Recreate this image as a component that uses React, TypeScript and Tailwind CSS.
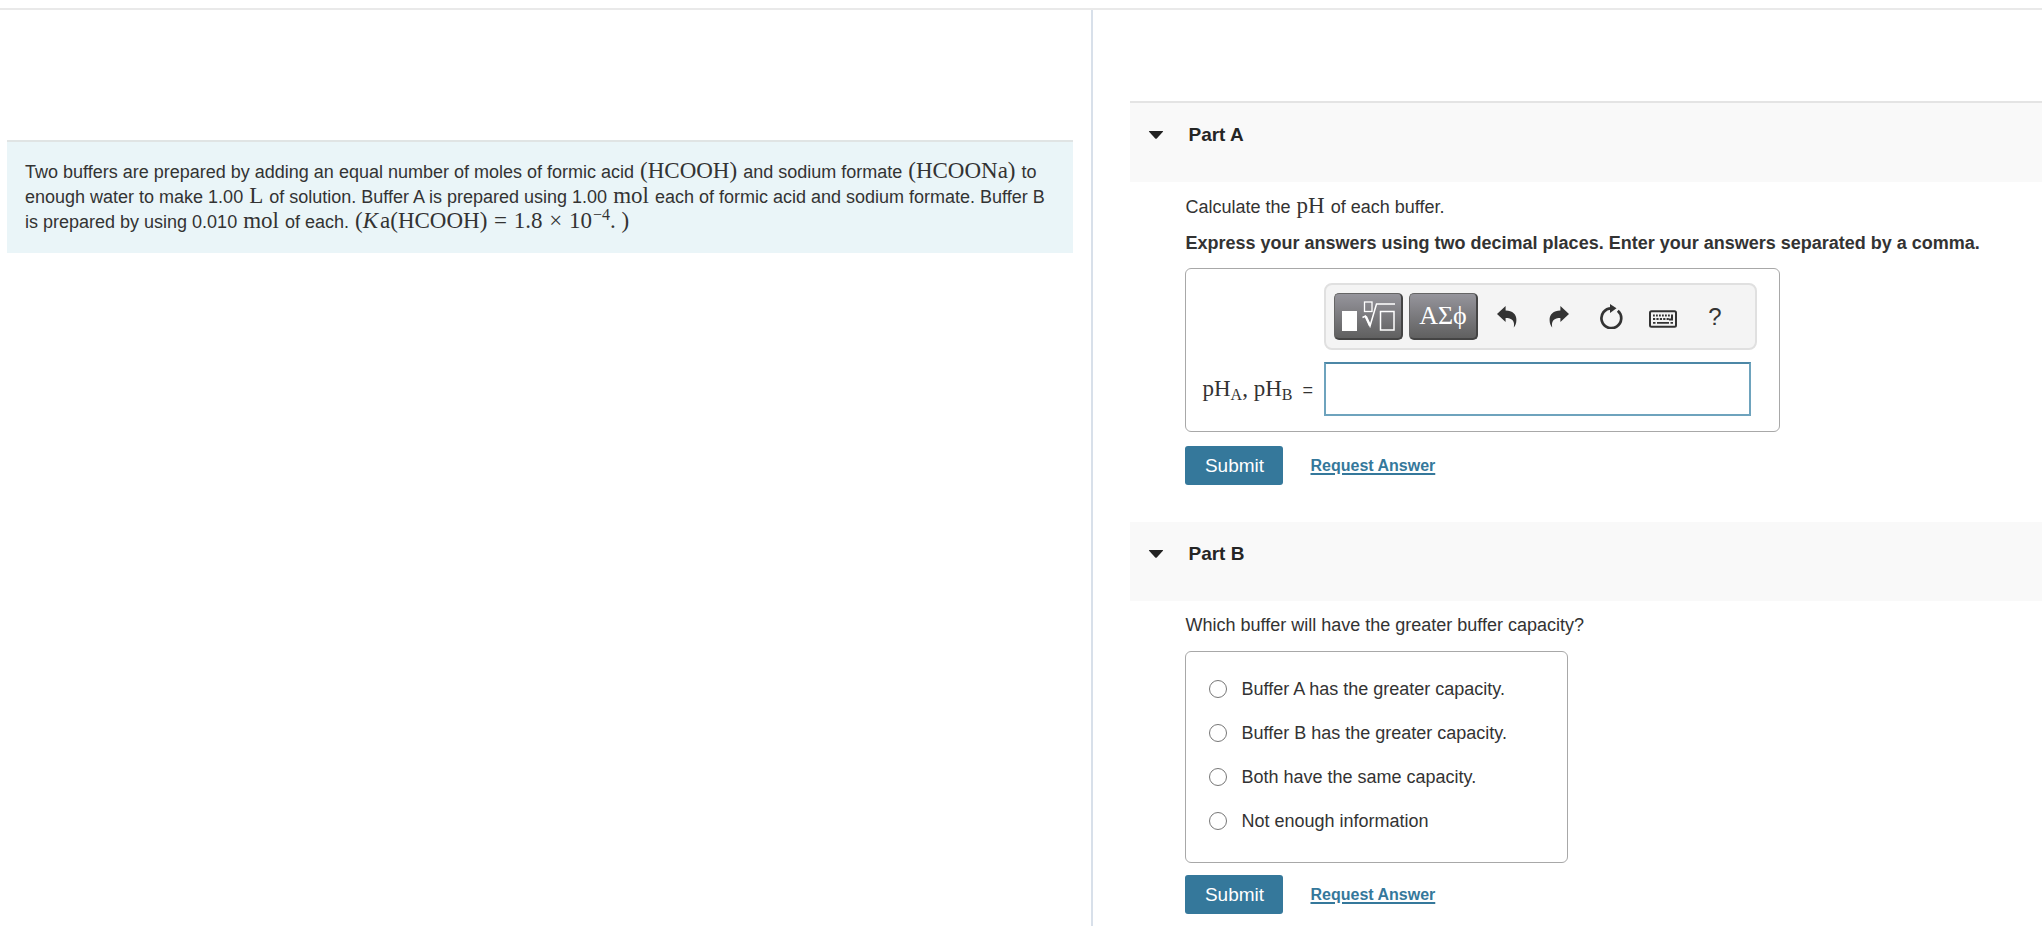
import React, { useState } from "react";

const CHOICES = [
  "Buffer A has the greater capacity.",
  "Buffer B has the greater capacity.",
  "Both have the same capacity.",
  "Not enough information",
];

// Inline chemistry / math text
const Tex = ({ children }: { children: React.ReactNode }) => (
  <span className="px-px font-['Liberation_Serif',serif] text-[23px] leading-none">
    {children}
  </span>
);

const PartHeader = ({ title, open, onToggle, className }: {
  title: string;
  open: boolean;
  onToggle: () => void;
  className: string;
}) => (
  <h2 className={className}>
    <button
      type="button"
      aria-expanded={open}
      onClick={onToggle}
      className="flex items-center gap-6 pl-[18px] text-[19px] leading-6 font-bold text-[#252525]"
    >
      <svg
        width="16"
        height="10"
        viewBox="0 0 16 10"
        className={open ? "" : "-rotate-90"}
        aria-hidden="true"
      >
        <path d="M1.5 1h13q1 0 .4.8L9 8.2q-1 1-2 0L1.1 1.8Q.5 1 1.5 1z" fill="#222" />
      </svg>
      {title}
    </button>
  </h2>
);

const Actions = ({ className }: { className: string }) => (
  <div className={className}>
    <button
      type="submit"
      className="h-[39px] w-[98px] rounded-[3px] bg-[#35789b] text-[19px] text-white hover:bg-[#2a617e]"
    >
      Submit
    </button>
    <a href="#answer" className="text-base font-bold text-[#35789b] underline decoration-2 underline-offset-2">
      Request Answer
    </a>
  </div>
);

const TemplateIcon = () => (
  <svg width="53" height="30" viewBox="0 0 53 30" fill="none" stroke="#fff" aria-hidden="true">
    <rect x="0" y="10" width="15" height="20" fill="#fff" stroke="none" />
    <rect x="22.5" y="1" width="7.5" height="9.5" strokeWidth="1.3" />
    <path d="M20.5 16.5l3-1.5 4.5 10L34.5 3H53" strokeWidth="1.5" />
    <path d="M23.8 15.5l4.2 9" strokeWidth="2.4" />
    <rect x="38.5" y="10.5" width="13.5" height="18.5" strokeWidth="1.5" />
  </svg>
);

const UndoIcon = ({ flip }: { flip?: boolean }) => (
  <svg
    width="20"
    height="22"
    viewBox="0 0 20 22"
    className={flip ? "-scale-x-100" : ""}
    aria-hidden="true"
  >
    <path
      d="M0 8L8.6 0v4.6C15.5 4.8 19.6 8.5 19.4 14c0 3-1 5.5-2.6 7.6.5-3.2.3-5.6-1.2-7.3-1.6-1.7-4-2.3-7-2.3V16z"
      fill="#333"
    />
  </svg>
);

const ResetIcon = () => (
  <svg width="24" height="25" viewBox="0 0 24 25" aria-hidden="true">
    <path d="M18.8 6.7A9.9 9.9 0 1 1 12.5 4.3" fill="none" stroke="#333" strokeWidth="2.7" />
    <path d="M11 0l6.5 4.2L11 9z" fill="#333" />
  </svg>
);

const KeyboardIcon = () => (
  <svg width="28" height="18" viewBox="0 0 28 18" fill="none" stroke="#333" aria-hidden="true">
    <rect x="1" y="1.2" width="26" height="15.6" rx="1.5" strokeWidth="2" />
    <path d="M4 5.5h17" strokeWidth="1.8" strokeDasharray="1.8 1.2" />
    <path d="M4 9h17" strokeWidth="1.8" strokeDasharray="2.2 1.2" />
    <path d="M23 4.5v5h-3" strokeWidth="2" />
    <path d="M4 12.8h2.5M8 12.8h12M21.5 12.8h2.5" strokeWidth="1.8" />
  </svg>
);

const greyKey =
  "flex h-[47px] w-[69px] items-center justify-center rounded-[5px] border border-[#666] border-r-2 border-b-2 border-r-[#444] border-b-[#444] bg-linear-to-b from-[#96959c] to-[#606060] text-white";
const iconKey = "flex h-[47px] w-[52px] items-center justify-center";

const App = () => {
  const [answer, setAnswer] = useState("");
  const [choice, setChoice] = useState("");
  const [openA, setOpenA] = useState(true);
  const [openB, setOpenB] = useState(true);

  return (
    <div className="flex min-h-screen flex-col bg-white pt-2 font-['Liberation_Sans',Arial,sans-serif] text-lg leading-6 text-[#333]">
      <main className="flex flex-1 border-t-2 border-[#e9e9e9]">
        {/* Problem statement */}
        <section className="w-[53.55%] border-r-2 border-[#d8e0ea] pt-[130px] pr-[18px] pl-[7px]">
          <div className="border-t-2 border-[#e0e4e4] bg-[#eaf5f8] px-[18px] pt-[17px] pb-[19px]">
            <p>
              Two buffers are prepared by adding an equal number of moles of formic
              acid <Tex>(HCOOH)</Tex> and sodium formate <Tex>(HCOONa)</Tex> to enough
              water to make 1.00 <Tex>L</Tex> of solution. Buffer A is prepared using
              1.00 <Tex>mol</Tex> each of formic acid and sodium formate. Buffer B is
              prepared by using 0.010 <Tex>mol</Tex> of each.{" "}
              <Tex>
                (<i className="pr-[2px]">K</i>a(HCOOH) <span className="px-px">=</span>{" "}
                1.8 <span className="px-px">×</span> 10
                <sup className="pl-px text-base leading-none">−4</sup>. )
              </Tex>
            </p>
          </div>
        </section>

        {/* Question parts */}
        <section className="min-w-0 flex-1 pt-[91px] pl-[37px]">
          <PartHeader
            title="Part A"
            open={openA}
            onToggle={() => setOpenA(!openA)}
            className="h-[81px] border-t-2 border-[#e4e4e4] bg-[#f9f9f9] pt-5"
          />
          {openA && (
            <form className="pt-3 pl-[55px]" onSubmit={(e) => e.preventDefault()}>
              <p>
                Calculate the <Tex>pH</Tex> of each buffer.
              </p>
              <p className="mt-3 font-bold">
                Express your answers using two decimal places. Enter your answers
                separated by a comma.
              </p>
              <div className="mt-[13px] grid w-fit grid-cols-[auto_auto] gap-x-[11px] gap-y-3 rounded-md border border-[#a8a8a8] pt-[14px] pr-[22px] pb-[15px] pl-[15px]">
                <div className="col-start-2 flex h-[67px] w-[433px] items-center rounded-lg border-2 border-[#e0e0e0] bg-[#f4f4f4] pl-2">
                  <button type="button" aria-label="Templates" className={greyKey}>
                    <TemplateIcon />
                  </button>
                  <button
                    type="button"
                    className={`${greyKey} ml-[6px] mr-[3px] font-['Liberation_Serif',serif] text-[26px]`}
                  >
                    ΑΣϕ
                  </button>
                  <button type="button" aria-label="Undo" className={iconKey}>
                    <UndoIcon />
                  </button>
                  <button type="button" aria-label="Redo" className={iconKey}>
                    <UndoIcon flip />
                  </button>
                  <button type="button" aria-label="Reset" className={iconKey}>
                    <ResetIcon />
                  </button>
                  <button type="button" aria-label="Keyboard" className={`${iconKey} pt-1`}>
                    <KeyboardIcon />
                  </button>
                  <button type="button" className={`${iconKey} text-2xl`}>
                    ?
                  </button>
                </div>
                <label htmlFor="ph" className="self-center whitespace-nowrap">
                  <Tex>
                    pH<sub className="text-base leading-none">A</sub>, pH
                    <sub className="text-base leading-none">B</sub>
                  </Tex>{" "}
                  <span className="pl-1">=</span>
                </label>
                <input
                  id="ph"
                  type="text"
                  value={answer}
                  onChange={(e) => setAnswer(e.target.value)}
                  className="h-[54px] w-[427px] border-2 border-[#6ea3bd] border-t-[#4c87a6] bg-white px-2 outline-none"
                />
              </div>
              <Actions className="mt-[14px] flex items-center gap-[27px]" />
            </form>
          )}

          <PartHeader
            title="Part B"
            open={openB}
            onToggle={() => setOpenB(!openB)}
            className="mt-[37px] h-[79px] bg-[#f9f9f9] pt-5"
          />
          {openB && (
            <form className="pt-3 pl-[55px]" onSubmit={(e) => e.preventDefault()}>
              <fieldset>
                <legend>Which buffer will have the greater buffer capacity?</legend>
                <div className="mt-[14px] flex w-[383px] flex-col gap-5 rounded-md border border-[#a8a8a8] pt-[25px] pb-[29px] pl-[23px]">
                  {CHOICES.map((text) => (
                    <label key={text} className="flex items-center gap-[14px]">
                      <input
                        type="radio"
                        name="capacity"
                        value={text}
                        checked={choice === text}
                        onChange={() => setChoice(text)}
                        className="size-[18px] appearance-none rounded-full border border-[#777] bg-white checked:border-[5px] checked:border-[#35789b]"
                      />
                      {text}
                    </label>
                  ))}
                </div>
              </fieldset>
              <Actions className="mt-3 flex items-center gap-[27px]" />
            </form>
          )}
        </section>
      </main>
    </div>
  );
};

export default App;
